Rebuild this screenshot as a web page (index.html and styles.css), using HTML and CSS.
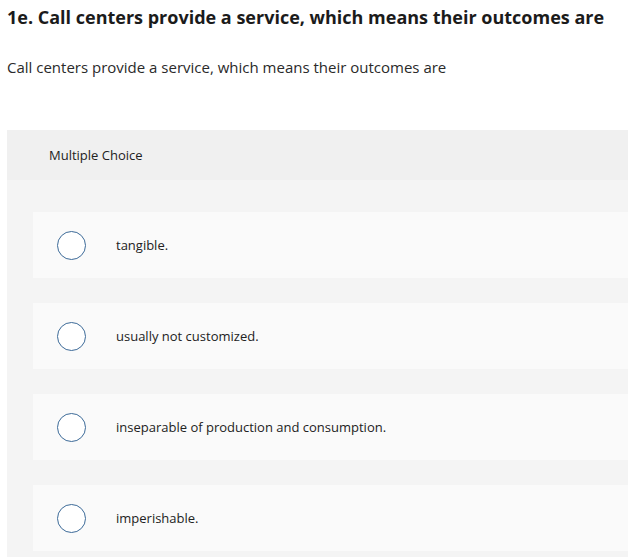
FILE: index.html
```html
<!DOCTYPE html>
<html>
<head>
<meta charset="utf-8">
<link rel="stylesheet" href="styles.css">
</head>
<body>
<h1 class="title">1e. Call centers provide a service, which means their outcomes are</h1>
<p class="prompt">Call centers provide a service, which means their outcomes are</p>
<div class="question">
  <div class="question-head">Multiple Choice</div>
  <div class="options">
    <div class="option"><span class="radio"></span><span class="label">tangible.</span></div>
    <div class="option"><span class="radio"></span><span class="label">usually not customized.</span></div>
    <div class="option"><span class="radio"></span><span class="label">inseparable of production and consumption.</span></div>
    <div class="option"><span class="radio"></span><span class="label">imperishable.</span></div>
  </div>
</div>
</body>
</html>
```
FILE: styles.css
```css
html, body {
  margin: 0;
  padding: 0;
  overflow: hidden;
  background: #ffffff;
}
body {
  font-family: "Open Sans", Lato, sans-serif;
  color: #222222;
  padding-left: 7px;
}
.title {
  margin: 0;
  padding-top: 5px;
  font-size: 18px;
  line-height: 24px;
  font-weight: 700;
  color: #1b1b1b;
  white-space: nowrap;
}
.prompt {
  margin: 0;
  padding-top: 28px;
  font-size: 15px;
  line-height: 20px;
  color: #2a2a2a;
  white-space: nowrap;
}
.question {
  margin-top: 53px;
  width: 640px;
  background: #f4f4f4;
  padding-bottom: 20px;
}
.question-head {
  height: 50px;
  background: #f0f0f0;
  display: flex;
  align-items: center;
  padding-left: 42px;
  font-size: 13px;
  color: #222222;
}
.options {
  display: flex;
  flex-direction: column;
  gap: 25px;
  padding-top: 32px;
  padding-left: 26px;
}
.option {
  height: 66px;
  background: #fafafa;
  display: flex;
  align-items: center;
  padding-left: 24px;
}
.radio {
  box-sizing: border-box;
  width: 29px;
  height: 29px;
  border: 1.5px solid #3c6a98;
  border-radius: 50%;
  background: #ffffff;
  flex: none;
}
.label {
  margin-left: 30px;
  font-size: 13px;
  color: #222222;
}
```
